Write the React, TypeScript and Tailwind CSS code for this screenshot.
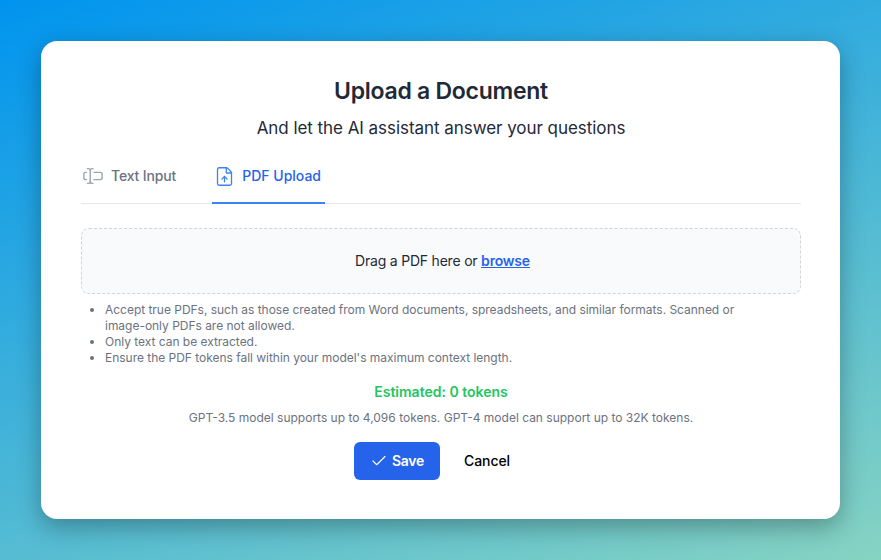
import React from 'react';
import { Check, FileUp, TextCursorInput } from 'lucide-react';

export default function App() {
  return (
    <div className="h-[560px] w-full flex items-center justify-center bg-[linear-gradient(160deg,#0094ef,#86d3c2)] font-['Inter',sans-serif] overflow-hidden">
      <div className="w-[799px] h-[478px] bg-white rounded-2xl shadow-[0_8px_24px_rgba(0,0,0,0.3)] pl-10 pr-[39px] pt-[32px]">
        <h1 className="text-[23px] tracking-[-0.012em] leading-[36px] font-semibold text-[#1f2937] text-center">Upload a Document</h1>
        <p className="mt-[5px] text-[17px] tracking-[-0.003em] leading-[28px] text-[#1f2937] text-center">And let the AI assistant answer your questions</p>

        {/* Tabs */}
        <div className="mt-[8px] flex border-b border-[#e5e7eb] text-sm font-medium">
          <button className="self-start flex items-center gap-[7px] h-[52px] pl-[1px] tracking-[-0.01em] text-[#6b7280]">
            <TextCursorInput size={22} strokeWidth={1.5} className="text-[#9ca3af]" />
            Text Input
          </button>
          <button className="ml-[36px] flex items-center gap-[7px] h-[54px] pl-[2px] pr-1 text-[#2563eb] border-b-2 border-[#3b82f6] -mb-px">
            <FileUp size={21} strokeWidth={1.5} className="text-[#3b82f6]" />
            PDF Upload
          </button>
        </div>

        {/* Drop zone */}
        <div className="mt-6 h-[66px] pl-[3px] flex items-center justify-center rounded-lg border border-dashed border-[#d1d5db] bg-[#f9fafb] text-sm tracking-[-0.015em] text-[#1f2937]">
          <span>
            Drag a PDF here or <a className="font-semibold text-[#2563eb] underline">browse</a>
          </span>
        </div>

        <ul className="mt-2 pl-6 pr-10 list-disc text-xs tracking-[-0.002em] leading-4 text-[#6b7280]">
          <li>Accept true PDFs, such as those created from Word documents, spreadsheets, and similar formats. Scanned or image-only PDFs are not allowed.</li>
          <li>Only text can be extracted.</li>
          <li>Ensure the PDF tokens fall within your model's maximum context length.</li>
        </ul>

        <p className="mt-4 text-sm leading-5 font-semibold text-[#22c55e] text-center">Estimated: 0 tokens</p>
        <p className="mt-[6px] text-xs leading-5 text-[#6b7280] text-center">GPT-3.5 model supports up to 4,096 tokens. GPT-4 model can support up to 32K tokens.</p>

        <div className="mt-[14px] flex justify-center gap-[6px]">
          <button className="w-[86px] h-[38px] flex items-center justify-center gap-[4px] rounded-md bg-[#2563eb] text-white text-sm font-semibold tracking-[-0.02em]">
            <Check size={18} strokeWidth={1.5} />
            Save
          </button>
          <button className="w-[82px] h-[38px] text-sm font-medium tracking-[-0.005em] text-black">Cancel</button>
        </div>
      </div>
    </div>
  );
}
